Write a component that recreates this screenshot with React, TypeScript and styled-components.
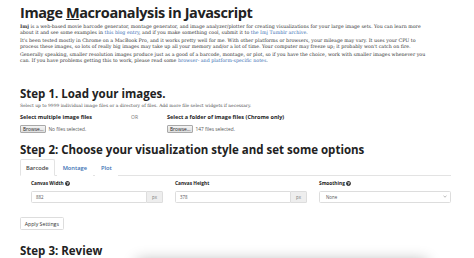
import React from "react";
import styled, { createGlobalStyle } from "styled-components";
import { FaQuestionCircle } from "react-icons/fa";

const Global = createGlobalStyle`
  html, body { margin: 0; padding: 0; background: #fff; }
  body {
    font-family: "Open Sans", "Liberation Sans", sans-serif;
    color: #333;
    overflow: hidden;
  }
`;

const Page = styled.div`
  box-sizing: border-box;
  width: 474px;
  padding: 0 23px 0 20px;
`;

const Title = styled.h1`
  margin: 4px 0 2px;
  font-size: 14.5px;
  line-height: 18px;
  font-weight: 700;
  letter-spacing: -0.4px;
  color: #222;
`;

const Under = styled.span`
  text-decoration: underline;
  text-decoration-thickness: 1px;
  text-underline-offset: 1px;
`;

const Para = styled.p`
  margin: 0 0 2.6px;
  font-family: "DejaVu Serif", "Liberation Serif", serif;
  font-size: 4.75px;
  line-height: 5.7px;
  color: #333;
  white-space: nowrap;
`;

const Link = styled.a`
  color: #3a70b3;
  text-decoration: none;
`;

const StepHeading = styled.h2<{ $top: number }>`
  margin: ${(p) => p.$top}px 0 0;
  font-size: 11.5px;
  line-height: 14px;
  font-weight: 700;
  color: #222;
`;

const Sub = styled.p`
  margin: 2.4px 0 0;
  font-family: "DejaVu Serif", "Liberation Serif", serif;
  font-size: 4.4px;
  line-height: 5.5px;
  color: #555;
  white-space: nowrap;
`;

const FileRow = styled.div`
  display: flex;
  margin-top: 6px;
`;

const FileCol = styled.div<{ $w?: number }>`
  display: flex;
  flex-direction: column;
  width: ${(p) => (p.$w ? `${p.$w}px` : "auto")};
`;

const FieldLabel = styled.div`
  font-size: 5.5px;
  line-height: 7px;
  font-weight: 700;
  color: #222;
  white-space: nowrap;
`;

const Or = styled.div`
  font-size: 5px;
  line-height: 7px;
  color: #777;
`;

const FileLine = styled.div`
  display: flex;
  align-items: center;
  gap: 2px;
  margin-top: 4px;
  height: 7.5px;
`;

const Browse = styled.span`
  box-sizing: border-box;
  display: inline-flex;
  align-items: center;
  height: 7.5px;
  padding: 0 2px;
  border: 1px solid #a9a9a9;
  border-radius: 1px;
  background: linear-gradient(#f4f4f4, #dedede);
  font-size: 4.8px;
  color: #222;
`;

const FileStatus = styled.span`
  font-size: 4.8px;
  color: #555;
  white-space: nowrap;
`;

const TabBar = styled.div`
  display: flex;
  margin-top: 2.5px;
  height: 16px;
  border-bottom: 1px solid #e3e3e3;
`;

const Tab = styled.div<{ $active?: boolean }>`
  box-sizing: border-box;
  display: flex;
  align-items: center;
  height: 17px;
  padding: 0 5px;
  margin-right: 2px;
  font-size: 5.7px;
  font-weight: 600;
  color: ${(p) => (p.$active ? "#444" : "#3a70b3")};
  background: #fff;
  border: 1px solid ${(p) => (p.$active ? "#e3e3e3" : "transparent")};
  border-bottom-color: ${(p) => (p.$active ? "#fff" : "transparent")};
  border-radius: 2px 2px 0 0;
`;

const Fields = styled.div`
  display: grid;
  grid-template-columns: repeat(3, 132px);
  column-gap: 12px;
  padding-left: 11px;
  margin-top: 3.7px;
`;

const Field = styled.div`
  display: flex;
  flex-direction: column;
`;

const SmallLabel = styled.div`
  display: flex;
  align-items: center;
  gap: 1.5px;
  font-size: 4.8px;
  line-height: 6px;
  font-weight: 700;
  color: #222;
  white-space: nowrap;
`;

const InputGroup = styled.div`
  display: flex;
  margin-top: 4.6px;
  height: 12.4px;
`;

const Input = styled.div`
  box-sizing: border-box;
  flex: 1;
  display: flex;
  align-items: center;
  padding-left: 4px;
  border: 1px solid #ddd;
  border-radius: 1.5px 0 0 1.5px;
  font-size: 4.4px;
  color: #555;
`;

const Addon = styled.div`
  box-sizing: border-box;
  width: 16px;
  display: flex;
  align-items: center;
  justify-content: center;
  background: #eee;
  border: 1px solid #ddd;
  border-left: none;
  border-radius: 0 1.5px 1.5px 0;
  font-size: 4.4px;
  color: #777;
`;

const Select = styled.div`
  box-sizing: border-box;
  display: flex;
  align-items: center;
  justify-content: space-between;
  margin-top: 4.6px;
  height: 12px;
  padding: 0 3px 0 6px;
  border: 1px solid #ddd;
  border-radius: 1.5px;
  font-size: 4.4px;
  color: #555;
`;

const ApplyButton = styled.div`
  box-sizing: border-box;
  display: inline-flex;
  align-items: center;
  height: 12.8px;
  width: 43.6px;
  justify-content: center;
  margin-top: 14.3px;
  border: 1px solid #ddd;
  border-radius: 1.5px;
  background: #fff;
  font-size: 5.2px;
  color: #333;
`;

const Preview = styled.div`
  width: 290px;
  height: 100px;
  margin: 3px 0 0 117px;
  background: #fff;
  box-shadow: 0 0 14px rgba(0, 0, 0, 0.32);
`;

const Help = () => <FaQuestionCircle size={5} color="#333" />;

export default function App() {
  return (
    <>
      <Global />
      <Page>
        <Title>
          Image <Under>M</Under>acroanalysis in Javascript
        </Title>
        <Para>
          <b>Imj</b> is a web-based movie barcode generator, montage generator, and image analyzer/plotter for creating visualizations for your large image sets. You can learn more
          <br />
          about it and see some examples in <Link>this blog entry</Link>, and if you make something cool, submit it to <Link>the Imj Tumblr archive</Link>.
        </Para>
        <Para>
          It's been tested mostly in Chrome on a MacBook Pro, and it works pretty well for me. With other platforms or browsers, your mileage may vary. It uses your CPU to
          <br />
          process these images, so lots of really big images may take up all your memory and/or a lot of time. Your computer may freeze up; it probably won't catch on fire.
        </Para>
        <Para>
          Generally speaking, smaller resolution images produce just as a good of a barcode, montage, or plot, so if you have the choice, work with smaller images whenever you
          <br />
          can. If you have problems getting this to work, please read some <Link>browser- and platform-specific notes</Link>.
        </Para>

        <StepHeading $top={23.2}>Step 1. Load your images.</StepHeading>
        <Sub>Select up to 9999 individual image files or a directory of files. Add more file select widgets if necessary.</Sub>
        <FileRow>
          <FileCol $w={111}>
            <FieldLabel>Select multiple image files</FieldLabel>
            <FileLine>
              <Browse>Browse...</Browse>
              <FileStatus>No files selected.</FileStatus>
            </FileLine>
          </FileCol>
          <FileCol $w={36}>
            <Or>OR</Or>
          </FileCol>
          <FileCol>
            <FieldLabel>Select a folder of image files (Chrome only)</FieldLabel>
            <FileLine>
              <Browse>Browse...</Browse>
              <FileStatus>147 files selected.</FileStatus>
            </FileLine>
          </FileCol>
        </FileRow>

        <StepHeading $top={10}>Step 2: Choose your visualization style and set some options</StepHeading>
        <TabBar>
          <Tab $active>Barcode</Tab>
          <Tab>Montage</Tab>
          <Tab>Plot</Tab>
        </TabBar>
        <Fields>
          <Field>
            <SmallLabel>
              Canvas Width <Help />
            </SmallLabel>
            <InputGroup>
              <Input>882</Input>
              <Addon>px</Addon>
            </InputGroup>
          </Field>
          <Field>
            <SmallLabel>Canvas Height</SmallLabel>
            <InputGroup>
              <Input>378</Input>
              <Addon>px</Addon>
            </InputGroup>
          </Field>
          <Field>
            <SmallLabel>
              Smoothing <Help />
            </SmallLabel>
            <Select>
              <span>None</span>
              <svg width="4" height="3" viewBox="0 0 4 3">
                <path d="M0.5 0.8 L2 2.2 L3.5 0.8" stroke="#888" strokeWidth="0.6" fill="none" />
              </svg>
            </Select>
          </Field>
        </Fields>
        <ApplyButton>Apply Settings</ApplyButton>

        <StepHeading $top={13.5}>Step 3: Review</StepHeading>
        <Preview />
      </Page>
    </>
  );
}
